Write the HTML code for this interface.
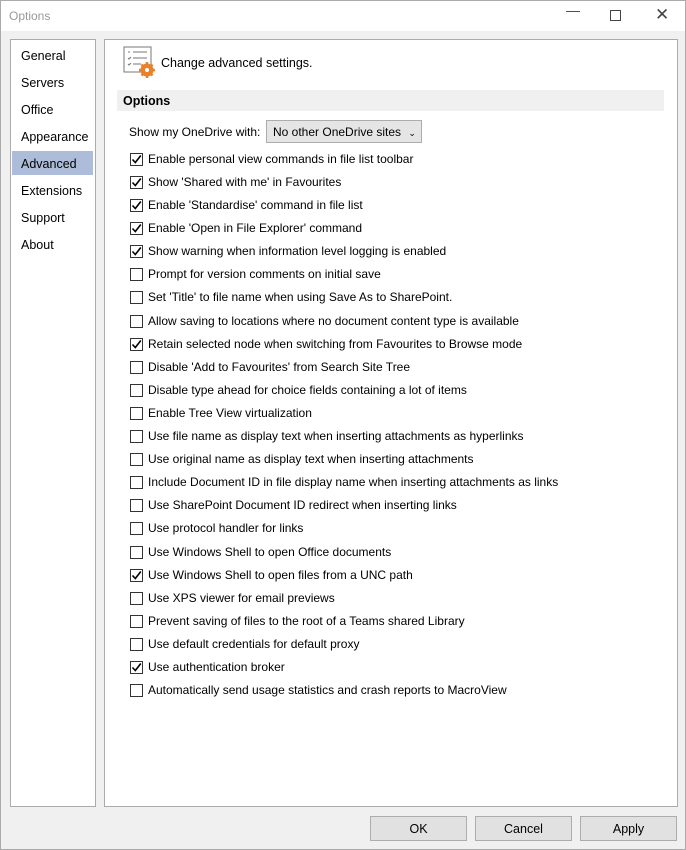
<!DOCTYPE html>
<html><head><style>
*{box-sizing:border-box;margin:0;padding:0}
body{width:686px;height:850px;background:#f0f0f0;font-family:"Liberation Sans",sans-serif;font-size:12px;color:#000;position:relative;overflow:hidden}
.frame{position:absolute;left:0;top:0;width:686px;height:850px;border:1px solid #aaa;pointer-events:none}
.title{position:absolute;left:0;top:0;width:686px;height:31px;background:#fff}
.title span{position:absolute;left:9px;top:9px;color:#999;font-size:12px}
.wc{position:absolute;top:6px;color:#444;font-size:14px}
.left{position:absolute;left:10px;top:39px;width:86px;height:768px;background:#fff;border:1px solid #ababab}
.left div{position:absolute;left:1px;width:81px;height:24px;padding:4px 0 0 9px;font-size:12.5px}
.left .sel{background:#adbcd8}
.right{position:absolute;left:104px;top:39px;width:574px;height:768px;background:#fff;border:1px solid #ababab}
.hdr{position:absolute;left:12px;top:50px;width:547px;height:21px;background:#f0f0f0;font-weight:bold;padding:4px 0 0 6px;font-size:12.5px}
.row{position:absolute;height:16px;white-space:nowrap}
.cb{position:absolute;left:0;top:1px;width:13px;height:13px;border:1px solid #333;background:#fff}
.cb svg{position:absolute;left:0;top:0}
.row span{position:absolute;left:18px;top:0}
.btn{position:absolute;top:816px;height:25px;background:#e1e1e1;border:1px solid #adadad;text-align:center;padding-top:5px;font-size:12.5px}
</style></head><body>
<div class="title"><span>Options</span>
<div class="wc" style="left:566px;top:2px">&#8212;</div>
<div class="wc" style="left:610px;width:11px;height:11px;border:1px solid #444;top:10px"></div>
<div class="wc" style="left:655px;top:5px;font-size:17px">&#x2715;</div></div>
<div class="left">
<div style="top:5px">General</div><div style="top:32px">Servers</div><div style="top:59px">Office</div><div style="top:86px">Appearance</div><div class="sel" style="top:111px;padding-top:6px">Advanced</div><div style="top:140px">Extensions</div><div style="top:167px">Support</div><div style="top:194px">About</div>
</div>
<div class="right">
<svg style="position:absolute;left:18px;top:6px" width="34" height="32" viewBox="0 0 34 32"><rect x="1" y="1" width="27" height="25" fill="#fff" stroke="#777"/><path d="M5 6h2M10 6h14M5 12l1 1 2-2M10 12h14M5 18l1 1 2-2M10 18h8" stroke="#777" fill="none"/><circle cx="24" cy="24" r="5" fill="none" stroke="#e8812a" stroke-width="3"/><path d="M24 16v16M16 24h16M18.5 18.5l11 11M29.5 18.5l-11 11" stroke="#e8812a" stroke-width="2.5"/><circle cx="24" cy="24" r="2" fill="#fff"/></svg>
<div style="position:absolute;left:56px;top:16px;font-size:12.5px">Change advanced settings.</div>
<div class="hdr">Options</div>
<div style="position:absolute;left:24px;top:85px">Show my OneDrive with:</div>
<div style="position:absolute;left:161px;top:80px;width:156px;height:23px;background:#e5e5e5;border:1px solid #acacac;padding:4px 0 0 6px">No other OneDrive sites <span style="font-size:9px;margin-left:4px">&#8964;</span></div>
</div>
<div style="position:absolute;left:130px;top:0">
<div class="row" style="top:152px"><div class="cb"><svg width="11" height="11"><path d="M1.5 5.5l2.8 3 5.5-7" stroke="#000" stroke-width="1.6" fill="none"/></svg></div><span>Enable personal view commands in file list toolbar</span></div>
<div class="row" style="top:175px"><div class="cb"><svg width="11" height="11"><path d="M1.5 5.5l2.8 3 5.5-7" stroke="#000" stroke-width="1.6" fill="none"/></svg></div><span>Show 'Shared with me' in Favourites</span></div>
<div class="row" style="top:198px"><div class="cb"><svg width="11" height="11"><path d="M1.5 5.5l2.8 3 5.5-7" stroke="#000" stroke-width="1.6" fill="none"/></svg></div><span>Enable 'Standardise' command in file list</span></div>
<div class="row" style="top:221px"><div class="cb"><svg width="11" height="11"><path d="M1.5 5.5l2.8 3 5.5-7" stroke="#000" stroke-width="1.6" fill="none"/></svg></div><span>Enable 'Open in File Explorer' command</span></div>
<div class="row" style="top:244px"><div class="cb"><svg width="11" height="11"><path d="M1.5 5.5l2.8 3 5.5-7" stroke="#000" stroke-width="1.6" fill="none"/></svg></div><span>Show warning when information level logging is enabled</span></div>
<div class="row" style="top:267px"><div class="cb"></div><span>Prompt for version comments on initial save</span></div>
<div class="row" style="top:290px"><div class="cb"></div><span>Set 'Title' to file name when using Save As to SharePoint.</span></div>
<div class="row" style="top:314px"><div class="cb"></div><span>Allow saving to locations where no document content type is available</span></div>
<div class="row" style="top:337px"><div class="cb"><svg width="11" height="11"><path d="M1.5 5.5l2.8 3 5.5-7" stroke="#000" stroke-width="1.6" fill="none"/></svg></div><span>Retain selected node when switching from Favourites to Browse mode</span></div>
<div class="row" style="top:360px"><div class="cb"></div><span>Disable 'Add to Favourites' from Search Site Tree</span></div>
<div class="row" style="top:383px"><div class="cb"></div><span>Disable type ahead for choice fields containing a lot of items</span></div>
<div class="row" style="top:406px"><div class="cb"></div><span>Enable Tree View virtualization</span></div>
<div class="row" style="top:429px"><div class="cb"></div><span>Use file name as display text when inserting attachments as hyperlinks</span></div>
<div class="row" style="top:452px"><div class="cb"></div><span>Use original name as display text when inserting attachments</span></div>
<div class="row" style="top:475px"><div class="cb"></div><span>Include Document ID in file display name when inserting attachments as links</span></div>
<div class="row" style="top:498px"><div class="cb"></div><span>Use SharePoint Document ID redirect when inserting links</span></div>
<div class="row" style="top:521px"><div class="cb"></div><span>Use protocol handler for links</span></div>
<div class="row" style="top:545px"><div class="cb"></div><span>Use Windows Shell to open Office documents</span></div>
<div class="row" style="top:568px"><div class="cb"><svg width="11" height="11"><path d="M1.5 5.5l2.8 3 5.5-7" stroke="#000" stroke-width="1.6" fill="none"/></svg></div><span>Use Windows Shell to open files from a UNC path</span></div>
<div class="row" style="top:591px"><div class="cb"></div><span>Use XPS viewer for email previews</span></div>
<div class="row" style="top:614px"><div class="cb"></div><span>Prevent saving of files to the root of a Teams shared Library</span></div>
<div class="row" style="top:637px"><div class="cb"></div><span>Use default credentials for default proxy</span></div>
<div class="row" style="top:660px"><div class="cb"><svg width="11" height="11"><path d="M1.5 5.5l2.8 3 5.5-7" stroke="#000" stroke-width="1.6" fill="none"/></svg></div><span>Use authentication broker</span></div>
<div class="row" style="top:683px"><div class="cb"></div><span>Automatically send usage statistics and crash reports to MacroView</span></div>
</div>
<div class="btn" style="left:370px;width:97px">OK</div>
<div class="btn" style="left:475px;width:97px">Cancel</div>
<div class="btn" style="left:580px;width:97px">Apply</div>
<div class="frame"></div>
</body></html>
